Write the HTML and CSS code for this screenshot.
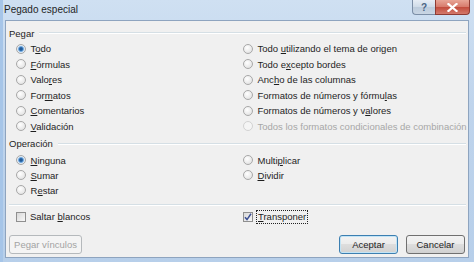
FILE: index.html
```html
<!DOCTYPE html>
<html>
<head>
<title>Pegado especial</title>
<meta charset="utf-8" />
<link rel="stylesheet" href="styles.css">
</head>
<body>
<div class="dialog">
	<div class="titleBar">
		<span class="titleText">Pegado especial</span>
		<div class="captionButtons">
			<div class="helpButton">?</div>
			<div class="closeButton">
				<svg width="11" height="9" viewBox="0 0 11 9"><path d="M1.5 1 L9.5 8 M9.5 1 L1.5 8" stroke="#fff" stroke-width="2.2" stroke-linecap="square"/></svg>
			</div>
		</div>
	</div>
	<div class="client">
		<div class="groupHeader"><span>Pegar</span><div class="groupLine"></div></div>
		<div class="optionGrid pasteGrid">
			<div class="option"><span class="radio checked"></span><span>T<u>o</u>do</span></div>
			<div class="option"><span class="radio"></span><span>Todo <u>u</u>tilizando el tema de origen</span></div>
			<div class="option"><span class="radio"></span><span><u>F</u>órmulas</span></div>
			<div class="option"><span class="radio"></span><span>Todo e<u>x</u>cepto bordes</span></div>
			<div class="option"><span class="radio"></span><span>Valo<u>r</u>es</span></div>
			<div class="option"><span class="radio"></span><span>Anc<u>h</u>o de las columnas</span></div>
			<div class="option"><span class="radio"></span><span>For<u>m</u>atos</span></div>
			<div class="option"><span class="radio"></span><span>Formatos de números y fórmu<u>l</u>as</span></div>
			<div class="option"><span class="radio"></span><span><u>C</u>omentarios</span></div>
			<div class="option"><span class="radio"></span><span>Formatos de números y v<u>a</u>lores</span></div>
			<div class="option"><span class="radio"></span><span><u>V</u>alidación</span></div>
			<div class="option disabled"><span class="radio"></span><span>Todos los formatos condicionales de combinación</span></div>
		</div>
		<div class="groupHeader operationHeader"><span>Operación</span><div class="groupLine"></div></div>
		<div class="optionGrid operationGrid">
			<div class="option"><span class="radio checked"></span><span><u>N</u>inguna</span></div>
			<div class="option"><span class="radio"></span><span>Multi<u>p</u>licar</span></div>
			<div class="option"><span class="radio"></span><span><u>S</u>umar</span></div>
			<div class="option"><span class="radio"></span><span><u>D</u>ividir</span></div>
			<div class="option"><span class="radio"></span><span>R<u>e</u>star</span></div>
		</div>
		<div class="separator"></div>
		<div class="optionGrid checkGrid">
			<div class="option"><span class="check"></span><span>Saltar <u>b</u>lancos</span></div>
			<div class="option"><span class="check checked"><svg width="8" height="8" viewBox="0 0 8 8"><path d="M1 4.2 L3 6.6 L7 0.8" fill="none" stroke="#3b4f93" stroke-width="1.5"/></svg></span><span class="focused"><u>T</u>ransponer</span></div>
		</div>
		<div class="buttonRow">
			<div class="button disabledButton">Pegar vínculos</div>
			<div class="rightButtons">
				<div class="button defaultButton">Aceptar</div>
				<div class="button">Cancelar</div>
			</div>
		</div>
	</div>
</div>
</body>
</html>
```

FILE: styles.css
```css
*{
	margin:0;
	padding:0;
	box-sizing:border-box;
}
body{
	width:474px;
	height:262px;
	overflow:hidden;
	font-family:"Liberation Sans",Arial,sans-serif;
	font-size:9.5px;
	color:#1e1e1e;
}
.dialog{
	display:flex;
	flex-direction:column;
	height:262px;
	background:linear-gradient(to bottom,#cfe0f2,#bfd4ec 40%,#b7cfea);
	box-shadow:inset 3px 0 0 #a6c5e8;
}
.titleBar{
	display:flex;
	justify-content:space-between;
	align-items:flex-start;
	height:20px;
}
.titleText{
	font-size:10px;
	line-height:20px;
	padding-left:4px;
	color:#1f1f1f;
}
.captionButtons{
	display:flex;
	margin-right:4px;
}
.helpButton,
.closeButton{
	height:15px;
	display:flex;
	align-items:center;
	justify-content:center;
	border:1px solid #7b8ea6;
	border-top:none;
}
.helpButton{
	width:23px;
	border-radius:0 0 0 4px;
	border-right:none;
	background:linear-gradient(to bottom,#e6edf5,#cfdbe8 50%,#bccbdc 50%,#c9d6e4);
	color:#4b6584;
	font-weight:bold;
	font-size:10px;
}
.closeButton{
	width:35px;
	border-color:#8e3b33;
	border-radius:0 0 4px 0;
	background:linear-gradient(to bottom,#e8a596,#d67a6b 50%,#c24b3b 50%,#d3796b);
}
.client{
	flex:1;
	display:flex;
	flex-direction:column;
	margin:0 5px 4px 5px;
	border:1px solid #8ea4bf;
	background:#f0f0f0;
}
.groupHeader{
	display:flex;
	align-items:center;
	height:14px;
	margin-top:5px;
	padding-left:3px;
	padding-right:2px;
}
.groupLine{
	flex:1;
	height:2px;
	margin-left:5px;
	border-top:1px solid #d5dfe5;
	border-bottom:1px solid #fff;
}
.operationHeader{
	margin-top:2.5px;
}
.optionGrid{
	display:grid;
	grid-template-columns:227px 1fr;
	padding-left:10px;
}
.pasteGrid{
	margin-top:1px;
	grid-auto-rows:15.5px;
}
.operationGrid{
	margin-top:2.25px;
	grid-auto-rows:15px;
}
.checkGrid{
	margin-top:3px;
	grid-auto-rows:15.5px;
}
.option{
	display:flex;
	align-items:center;
	white-space:nowrap;
}
.option.disabled{
	color:#a7a7a7;
}
.radio{
	flex:none;
	width:10px;
	height:10px;
	margin-right:4.5px;
	border-radius:50%;
	border:1px solid #a8a8a8;
	background:radial-gradient(circle at 40% 35%,#fff,#dcdcdc);
}
.radio.checked{
	background:radial-gradient(circle,#1d4c7f 0,#2f6eb0 1.6px,#7fb2e3 2.6px,#e3edf6 3.4px,#dadada 100%);
}
.option.disabled .radio{
	border-color:#d2d2d2;
	background:#f5f5f5;
}
.check{
	flex:none;
	display:flex;
	align-items:center;
	justify-content:center;
	width:10px;
	height:10px;
	margin-right:4px;
	border:1px solid #8f8f8f;
	background:linear-gradient(135deg,#d8d8d8,#f8f8f8);
}
.focused{
	outline:1px dotted #222;
	padding:0 1px;
	line-height:12px;
}
.separator{
	height:2px;
	margin:6px 2px 0 3px;
	border-top:1px solid #d5dfe5;
	border-bottom:1px solid #fff;
}
.buttonRow{
	display:flex;
	justify-content:space-between;
	align-items:flex-end;
	margin-top:auto;
	padding:0 3px 3px 3px;
}
.rightButtons{
	display:flex;
	gap:8px;
}
.button{
	width:59px;
	height:19px;
	line-height:17px;
	text-align:center;
	border:1px solid #707070;
	border-radius:3px;
	background:linear-gradient(to bottom,#f3f3f3,#ebebeb 50%,#dddddd 50%,#d1d1d1);
}
.defaultButton{
	border-color:#3c7fb1;
	box-shadow:inset 0 0 0 1px #c2e4f6;
}
.disabledButton{
	width:73px;
	color:#a3a3a3;
	border-color:#b5b9bc;
	background:#f4f4f4;
}
```
